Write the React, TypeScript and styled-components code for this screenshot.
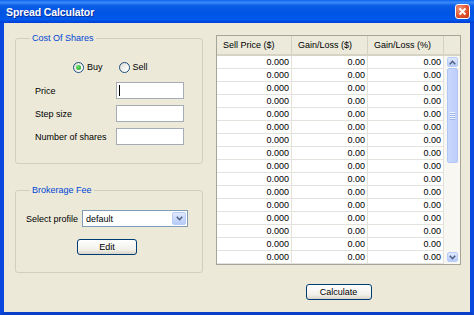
import styled, { createGlobalStyle } from "styled-components";

const GlobalStyle = createGlobalStyle`
  html, body {
    margin: 0;
    padding: 0;
    background: #ffffff;
  }
  body {
    font-family: "Liberation Sans", Arial, sans-serif;
    font-size: 9px;
    color: #000000;
  }
`;

const Window = styled.div`
  width: 474px;
  height: 315px;
  display: flex;
  flex-direction: column;
  overflow: hidden;
`;

const TitleBar = styled.div`
  height: 23px;
  flex: none;
  display: flex;
  align-items: center;
  justify-content: space-between;
  padding: 0 4px 0 6px;
  background: linear-gradient(
    to bottom,
    #0a63f0 0%,
    #3d8bf7 10%,
    #0a5de8 25%,
    #0054e3 55%,
    #0059ec 85%,
    #003dd7 100%
  );
`;

const Title = styled.span`
  color: #ffffff;
  font-weight: bold;
  font-size: 10.5px;
  text-shadow: 1px 1px 0 #0b2f9c;
  letter-spacing: -0.1px;
`;

const CloseButton = styled.div`
  width: 15px;
  height: 15px;
  box-sizing: border-box;
  border: 1px solid #ffffff;
  border-radius: 3px;
  background: radial-gradient(circle at 30% 30%, #f0977a 0%, #e0542f 55%, #c2351a 100%);
  display: flex;
  align-items: center;
  justify-content: center;
`;

const Client = styled.div`
  flex: 1;
  display: flex;
  gap: 13px;
  padding: 9px 9px 0 11px;
  background: #ece9d8;
  border-left: 4px solid #0848de;
  border-right: 4px solid #0848de;
  border-bottom: 3px solid #0a3fc9;
  box-sizing: border-box;
`;

const LeftColumn = styled.div`
  width: 188px;
  flex: none;
  display: flex;
  flex-direction: column;
`;

const GroupBox = styled.fieldset<{ $height: number; $padTop: number; $gapTop?: number }>`
  margin: ${(p) => p.$gapTop ?? 0}px 0 0 0;
  padding: ${(p) => p.$padTop}px 14px 0 10px;
  height: ${(p) => p.$height}px;
  box-sizing: border-box;
  border: 1px solid #d0d0bf;
  border-radius: 3px;
  min-width: 0;
`;

const Legend = styled.legend`
  margin-left: 4px;
  padding: 0 2px;
  color: #0046d5;
  line-height: 12px;
  font-size: 9px;
`;

const RadioRow = styled.div`
  display: flex;
  align-items: center;
  gap: 16px;
  height: 12px;
  padding-left: 47px;
  margin-bottom: 9px;
`;

const RadioOption = styled.label`
  display: flex;
  align-items: center;
  gap: 3px;
`;

const RadioDot = styled.span<{ $checked?: boolean }>`
  width: 11px;
  height: 11px;
  box-sizing: border-box;
  border-radius: 50%;
  border: 1px solid #1c5180;
  background: linear-gradient(135deg, #dcd9cf 0%, #ffffff 80%);
  display: inline-flex;
  align-items: center;
  justify-content: center;

  &::after {
    content: "";
    width: 5px;
    height: 5px;
    border-radius: 50%;
    background: ${(p) =>
      p.$checked ? "radial-gradient(circle at 35% 35%, #6ae46a, #21a121)" : "transparent"};
  }
`;

const FieldGrid = styled.div`
  display: grid;
  grid-template-columns: 81px 68px;
  grid-auto-rows: 17px;
  row-gap: 6px;
  align-items: center;
  padding-left: 9px;
`;

const TextBox = styled.div`
  height: 17px;
  box-sizing: border-box;
  border: 1px solid #a5acb5;
  background: #ffffff;
  display: flex;
  align-items: center;
  padding-left: 2px;
`;

const Caret = styled.span`
  width: 1px;
  height: 11px;
  background: #000000;
`;

const ProfileRow = styled.div`
  display: flex;
  align-items: center;
  height: 17px;
`;

const ProfileLabel = styled.span`
  width: 56px;
  flex: none;
`;

const SelectBox = styled.div`
  width: 106px;
  height: 17px;
  box-sizing: border-box;
  border: 1px solid #7f9db9;
  background: #ffffff;
  display: flex;
  align-items: center;
  justify-content: space-between;
  padding: 1px 1px 1px 3px;
`;

const DropButton = styled.div`
  width: 14px;
  height: 13px;
  box-sizing: border-box;
  border: 1px solid #b9cdf6;
  border-radius: 2px;
  background: linear-gradient(to bottom, #dfe8fd, #b7cbf8);
  display: flex;
  align-items: center;
  justify-content: center;
`;

const CenterRow = styled.div<{ $top: number }>`
  display: flex;
  justify-content: center;
  margin-top: ${(p) => p.$top}px;
`;

const PushButton = styled.div<{ $width: number }>`
  width: ${(p) => p.$width}px;
  height: 16px;
  box-sizing: border-box;
  border: 1px solid #003c74;
  border-radius: 3px;
  background: linear-gradient(to bottom, #ffffff 0%, #f1f0ea 70%, #d9d4c8 100%);
  display: flex;
  align-items: center;
  justify-content: center;
`;

const RightColumn = styled.div`
  width: 245px;
  flex: none;
  padding-top: 3px;
  display: flex;
  flex-direction: column;
`;

const Table = styled.div`
  height: 230px;
  box-sizing: border-box;
  border: 1px solid #a5a59a;
  background: #ffffff;
  display: flex;
  flex-direction: column;
`;

const HeaderRow = styled.div`
  display: grid;
  grid-template-columns: 75px 76px 76px 1fr;
  height: 20px;
  box-sizing: border-box;
  flex: none;
  background: #ebeadb;
  border-bottom: 2px solid #d6d3c5;
`;

const HeaderCell = styled.div`
  display: flex;
  align-items: center;
  padding-left: 6px;
  border-right: 1px solid #d4d0c2;
  box-sizing: border-box;
  &:last-child {
    border-right: none;
  }
`;

const TableBody = styled.div`
  flex: 1;
  display: flex;
  overflow: hidden;
`;

const Rows = styled.div`
  width: 227px;
  flex: none;
  overflow: hidden;
`;

const DataRow = styled.div`
  display: grid;
  grid-template-columns: 75px 76px 76px;
  height: 13px;
  box-sizing: border-box;
  border-bottom: 1px solid #e3e2dc;
`;

const DataCell = styled.div`
  text-align: right;
  padding-right: 2px;
  line-height: 12px;
  border-right: 1px solid #e3e2dc;
`;

const ScrollBar = styled.div`
  flex: 1;
  display: flex;
  flex-direction: column;
  align-items: center;
  padding: 1px 1px 2px 2px;
  background: #f8f7f2;
`;

const ScrollButton = styled.div`
  width: 11px;
  height: 10px;
  flex: none;
  box-sizing: border-box;
  border: 1px solid #b9cdf6;
  border-radius: 2px;
  background: linear-gradient(to bottom, #dfe8fd, #b7cbf8);
  display: flex;
  align-items: center;
  justify-content: center;
`;

const Thumb = styled.div`
  width: 11px;
  height: 95px;
  margin-top: 1px;
  box-sizing: border-box;
  border: 1px solid #b1c6f5;
  border-radius: 2px;
  background: linear-gradient(to right, #c9d8fc, #bccefa);
  display: flex;
  flex-direction: column;
  align-items: center;
  justify-content: center;
  gap: 1px;
`;

const Grip = styled.span`
  width: 5px;
  height: 1px;
  background: #eef3fe;
  box-shadow: 0 1px 0 #9db6ee;
`;

const Track = styled.div`
  flex: 1;
`;

const Chevron = ({ up }: { up?: boolean }) => (
  <svg width="7" height="5" viewBox="0 0 7 5">
    <path
      d={up ? "M0.8 4.2 L3.5 1.3 L6.2 4.2" : "M0.8 0.8 L3.5 3.7 L6.2 0.8"}
      fill="none"
      stroke="#4d6185"
      strokeWidth="1.6"
    />
  </svg>
);

const rows = Array.from({ length: 16 }, (_, i) => i);

export default function App() {
  return (
    <>
      <GlobalStyle />
      <Window>
        <TitleBar>
          <Title>Spread Calculator</Title>
          <CloseButton>
            <svg width="9" height="9" viewBox="0 0 9 9">
              <path d="M1.5 1.5 L7.5 7.5 M7.5 1.5 L1.5 7.5" stroke="#ffffff" strokeWidth="1.8" />
            </svg>
          </CloseButton>
        </TitleBar>
        <Client>
          <LeftColumn>
            <GroupBox $height={132} $padTop={17}>
              <Legend>Cost Of Shares</Legend>
              <RadioRow>
                <RadioOption>
                  <RadioDot $checked />
                  Buy
                </RadioOption>
                <RadioOption>
                  <RadioDot />
                  Sell
                </RadioOption>
              </RadioRow>
              <FieldGrid>
                <span>Price</span>
                <TextBox>
                  <Caret />
                </TextBox>
                <span>Step size</span>
                <TextBox />
                <span>Number of shares</span>
                <TextBox />
              </FieldGrid>
            </GroupBox>
            <GroupBox $height={89} $padTop={14} $gapTop={20}>
              <Legend>Brokerage Fee</Legend>
              <ProfileRow>
                <ProfileLabel>Select profile</ProfileLabel>
                <SelectBox>
                  <span>default</span>
                  <DropButton>
                    <Chevron />
                  </DropButton>
                </SelectBox>
              </ProfileRow>
              <CenterRow $top={12}>
                <PushButton $width={60}>Edit</PushButton>
              </CenterRow>
            </GroupBox>
          </LeftColumn>
          <RightColumn>
            <Table>
              <HeaderRow>
                <HeaderCell>Sell Price ($)</HeaderCell>
                <HeaderCell>Gain/Loss ($)</HeaderCell>
                <HeaderCell>Gain/Loss (%)</HeaderCell>
                <HeaderCell />
              </HeaderRow>
              <TableBody>
                <Rows>
                  {rows.map((r) => (
                    <DataRow key={r}>
                      <DataCell>0.000</DataCell>
                      <DataCell>0.00</DataCell>
                      <DataCell>0.00</DataCell>
                    </DataRow>
                  ))}
                </Rows>
                <ScrollBar>
                  <ScrollButton>
                    <Chevron up />
                  </ScrollButton>
                  <Thumb>
                    <Grip />
                    <Grip />
                    <Grip />
                    <Grip />
                  </Thumb>
                  <Track />
                  <ScrollButton>
                    <Chevron />
                  </ScrollButton>
                </ScrollBar>
              </TableBody>
            </Table>
            <CenterRow $top={19}>
              <PushButton $width={66}>Calculate</PushButton>
            </CenterRow>
          </RightColumn>
        </Client>
      </Window>
    </>
  );
}
